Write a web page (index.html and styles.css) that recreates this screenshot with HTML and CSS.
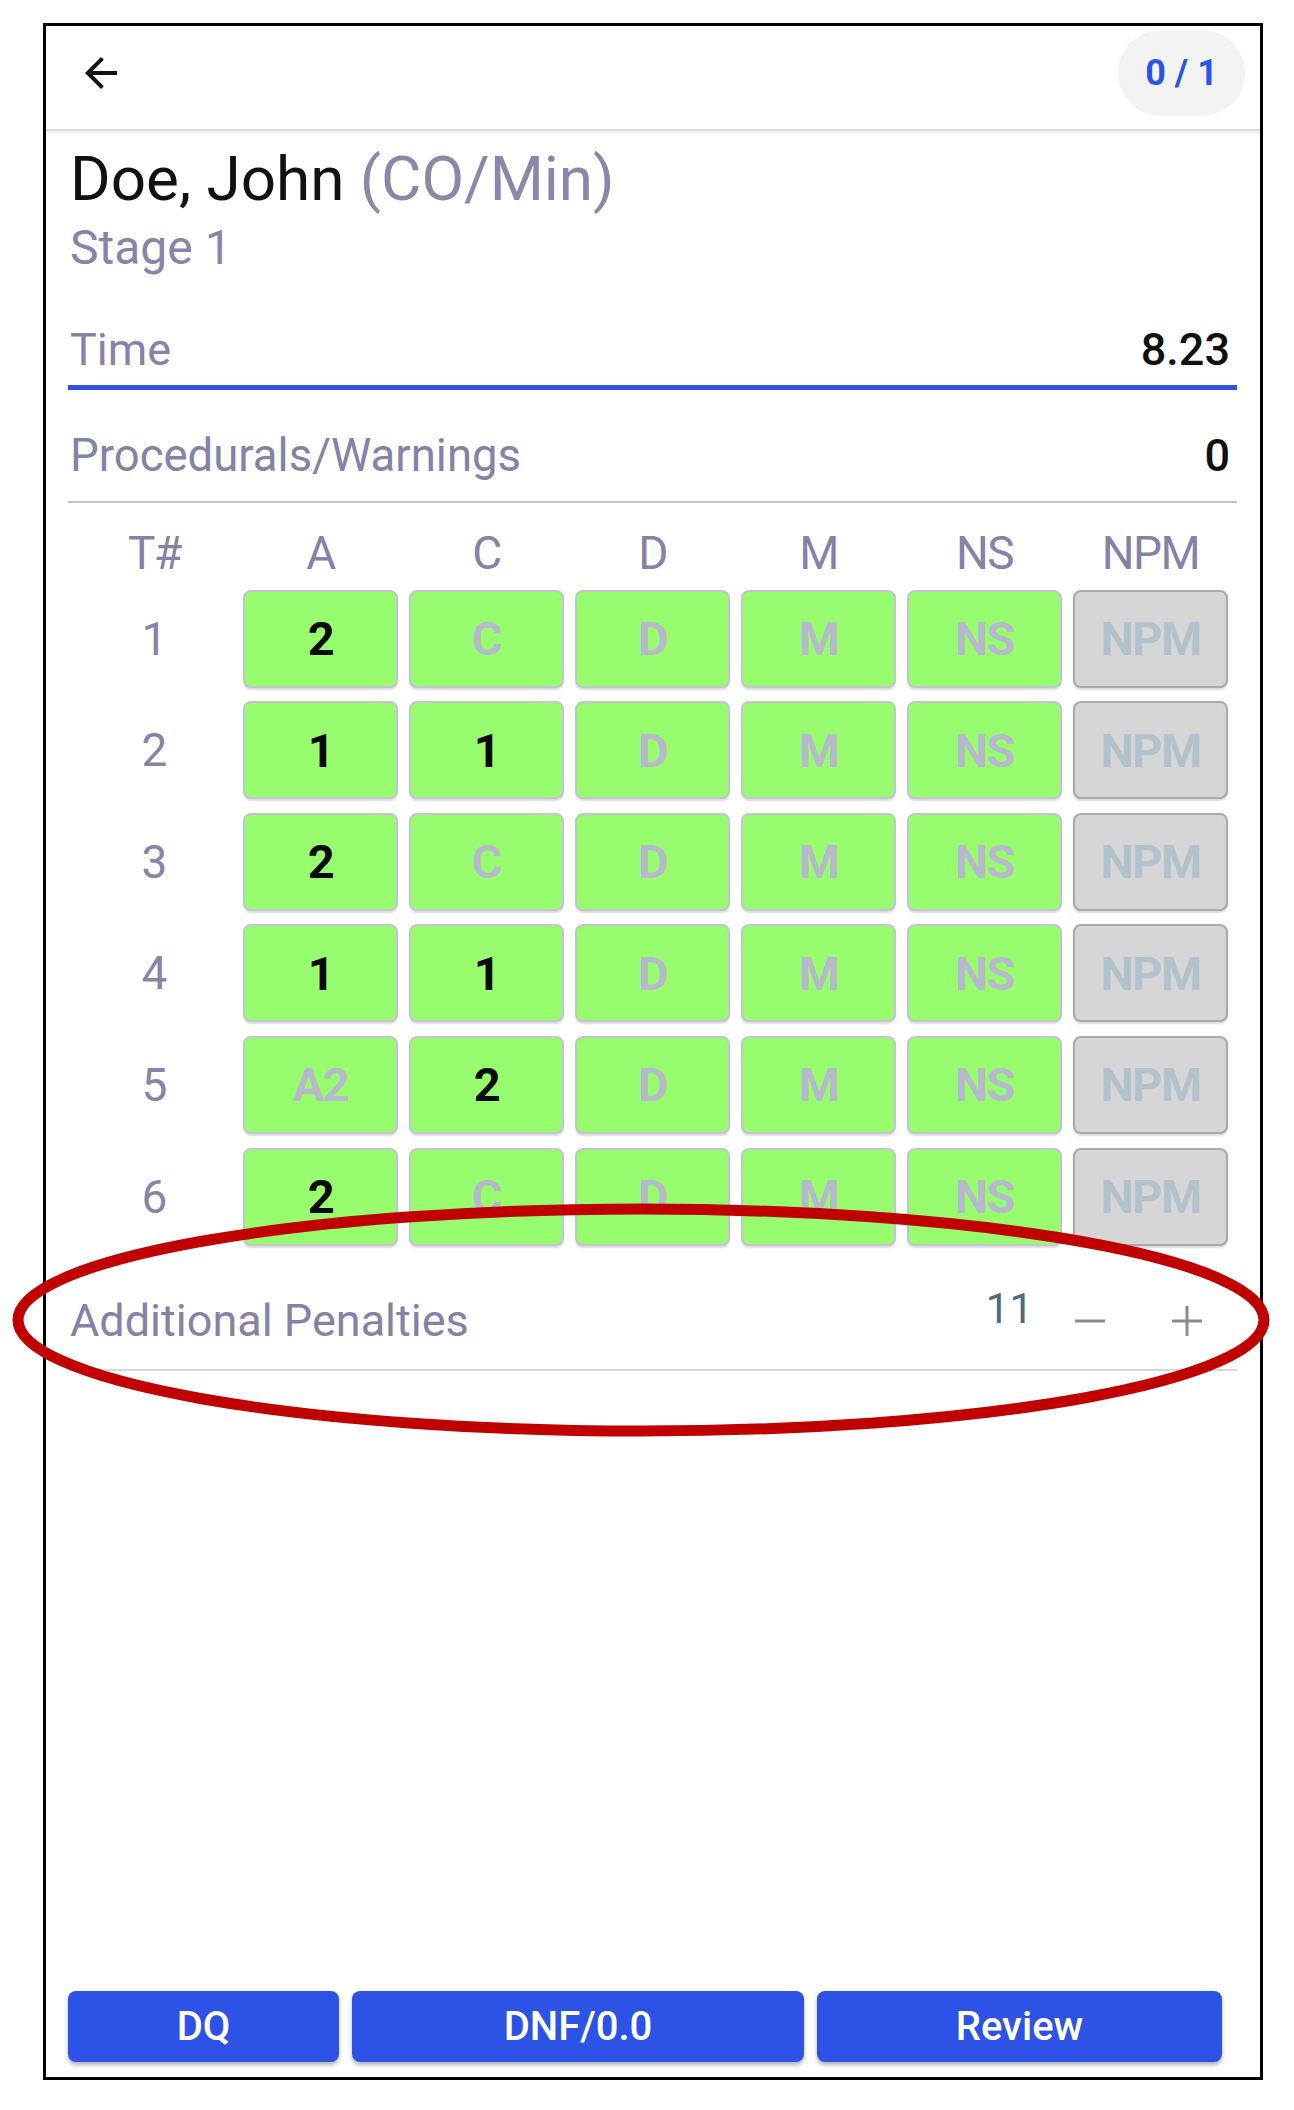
FILE: index.html
```html
<!DOCTYPE html>
<html lang="en">
<head>
<meta charset="utf-8">
<title>Stage 1 – Doe, John</title>
<link rel="stylesheet" href="styles.css">
</head>
<body>
<div class="page">
  <div class="device">
    <header class="topbar">
      <button class="icon-btn back" aria-label="Back">
        <svg viewBox="0 0 24 24" width="48" height="48"><path d="M20 11H7.83l5.59-5.59L12 4l-8 8 8 8 1.41-1.41L7.83 13H20v-2z"/></svg>
      </button>
      <span class="counter">0 / 1</span>
    </header>

    <main class="content">
      <h1 class="shooter">Doe, John <span class="division">(CO/Min)</span></h1>
      <div class="stage">Stage 1</div>

      <div class="field field-active">
        <span class="label">Time</span>
        <span class="value">8.23</span>
      </div>
      <div class="field field-procedurals">
        <span class="label">Procedurals/Warnings</span>
        <span class="value">0</span>
      </div>

      <div class="targets">
        <div class="th">T#</div><div class="th">A</div><div class="th">C</div><div class="th">D</div><div class="th">M</div><div class="th">NS</div><div class="th">NPM</div>

        <div class="tnum">1</div>
        <div class="hit set">2</div><div class="hit">C</div><div class="hit">D</div><div class="hit">M</div><div class="hit">NS</div><div class="hit npm">NPM</div>

        <div class="tnum">2</div>
        <div class="hit set">1</div><div class="hit set">1</div><div class="hit">D</div><div class="hit">M</div><div class="hit">NS</div><div class="hit npm">NPM</div>

        <div class="tnum">3</div>
        <div class="hit set">2</div><div class="hit">C</div><div class="hit">D</div><div class="hit">M</div><div class="hit">NS</div><div class="hit npm">NPM</div>

        <div class="tnum">4</div>
        <div class="hit set">1</div><div class="hit set">1</div><div class="hit">D</div><div class="hit">M</div><div class="hit">NS</div><div class="hit npm">NPM</div>

        <div class="tnum">5</div>
        <div class="hit">A2</div><div class="hit set">2</div><div class="hit">D</div><div class="hit">M</div><div class="hit">NS</div><div class="hit npm">NPM</div>

        <div class="tnum">6</div>
        <div class="hit set">2</div><div class="hit">C</div><div class="hit">D</div><div class="hit">M</div><div class="hit">NS</div><div class="hit npm">NPM</div>
      </div>

      <div class="field penalties">
        <span class="label">Additional Penalties</span>
        <div class="stepper">
          <span class="count">11</span>
          <button class="icon-btn step" aria-label="Decrease">
            <svg viewBox="0 0 48 48" width="48" height="48"><path d="M9 24h30"/></svg>
          </button>
          <button class="icon-btn step" aria-label="Increase">
            <svg viewBox="0 0 48 48" width="48" height="48"><path d="M9 24h30M24 9v30"/></svg>
          </button>
        </div>
      </div>
    </main>

    <footer class="actions">
      <button class="action dq">DQ</button>
      <button class="action dnf">DNF/0.0</button>
      <button class="action review">Review</button>
    </footer>
  </div>

  <svg class="callout" viewBox="0 0 1294 2110" width="1294" height="2110" aria-hidden="true">
    <ellipse cx="641" cy="1320" rx="623" ry="111"/>
  </svg>
</div>
</body>
</html>
```

FILE: styles.css
```css
* { box-sizing: border-box; }

html, body {
  margin: 0;
  padding: 0;
  background: #ffffff;
}

body {
  font-family: Roboto, "Liberation Sans", Arial, sans-serif;
  color: #111111;
}

.page {
  position: relative;
  width: 1294px;
  height: 2110px;
  overflow: hidden;
}

/* phone frame */
.device {
  margin: 23px 0 0 43px;
  width: 1220px;
  height: 2057px;
  border: 3px solid #000000;
  background: #ffffff;
  display: flex;
  flex-direction: column;
}

/* top app bar */
.topbar {
  display: flex;
  align-items: center;
  justify-content: space-between;
  padding: 4px 15px 13px 31px;
  border-bottom: 2px solid #dcdcdc;
  box-shadow: 0 2px 3px rgba(0, 0, 0, 0.08);
}

.icon-btn {
  border: 0;
  background: none;
  padding: 0;
  margin: 0;
  display: flex;
  align-items: center;
  justify-content: center;
  cursor: pointer;
}

.back svg { fill: #111111; }

.counter {
  width: 127px;
  height: 86px;
  border-radius: 43px;
  background: #f3f3f3;
  color: #2b55e4;
  font-weight: 700;
  font-size: 36px;
  display: flex;
  align-items: center;
  justify-content: center;
}

/* main content */
.content {
  flex: 1;
  padding: 12px 23px 0 22px;
}

.shooter {
  margin: 0;
  font-weight: 400;
  font-size: 62px;
  line-height: 72px;
  color: #111111;
  padding-left: 2px;
}

.division { color: #8a87aa; }

.stage {
  margin-top: 5px;
  font-size: 48px;
  line-height: 55px;
  color: #8784a8;
  padding-left: 2px;
}

.field {
  display: flex;
  align-items: baseline;
  justify-content: space-between;
  font-size: 45px;
  line-height: 54px;
  padding-left: 2px;
  padding-right: 7px;
}

.label { color: #8582a6; }

.value {
  color: #111111;
  font-weight: 500;
}

.field-active {
  margin-top: 48px;
  padding-bottom: 8px;
  border-bottom: 5px solid #2f52e6;
}

.field-procedurals {
  margin-top: 39px;
  padding-bottom: 18px;
  border-bottom: 2px solid #c2c2c2;
}

.field-procedurals .label { font-size: 45.5px; }

/* target grid */
.targets {
  margin-top: 28px;
  display: grid;
  grid-template-columns: repeat(7, 155px);
  grid-auto-rows: 98px;
  grid-template-rows: 45px;
  column-gap: 11px;
  row-gap: 13.6px;
  justify-content: center;
}

.th {
  text-align: center;
  font-size: 46px;
  line-height: 45px;
  letter-spacing: -1.5px;
  color: #8582a6;
}

.tnum {
  display: flex;
  align-items: center;
  justify-content: center;
  font-size: 46px;
  color: #8784a8;
}

.hit {
  display: flex;
  align-items: center;
  justify-content: center;
  background: #98fc6f;
  border: 2px solid #c4c4d0;
  border-radius: 8px;
  box-shadow: 0 2px 2px rgba(0, 0, 0, 0.14);
  font-size: 47px;
  font-weight: 700;
  letter-spacing: -1.5px;
  color: #b6b9cc;
}

.hit.set { color: #0a0a0a; }

.hit.npm {
  background: #d6d6d6;
  border-color: #a9a9a9;
  color: #b1c2cc;
}

/* additional penalties */
.penalties {
  margin-top: 42px;
  align-items: center;
  padding-bottom: 15px;
  padding-right: 26px;
  border-bottom: 2px solid #d8d8d8;
}

.stepper {
  display: flex;
  align-items: center;
}

.count {
  font-size: 42px;
  line-height: 42px;
  color: #4e6b7f;
  margin-right: 33px;
  margin-bottom: 24px;
}

.step + .step { margin-left: 49px; }

.step svg {
  fill: none;
  stroke: #8c8c8c;
  stroke-width: 3;
}

/* bottom actions */
.actions {
  display: flex;
  gap: 13px;
  padding: 0 0 15px 22px;
}

.action {
  height: 71px;
  border: 0;
  border-radius: 8px;
  background: #2d52e6;
  color: #ffffff;
  font-family: Roboto, "Liberation Sans", Arial, sans-serif;
  font-size: 40px;
  font-weight: 500;
  box-shadow: 0 3px 4px rgba(0, 0, 0, 0.3);
  cursor: pointer;
}

.dq { width: 271px; }
.dnf { width: 452px; }
.review { width: 405px; }

/* red annotation ring drawn over the penalties row */
.callout {
  position: absolute;
  left: 0;
  top: 0;
  pointer-events: none;
}

.callout ellipse {
  fill: none;
  stroke: #c00000;
  stroke-width: 11;
}
```
